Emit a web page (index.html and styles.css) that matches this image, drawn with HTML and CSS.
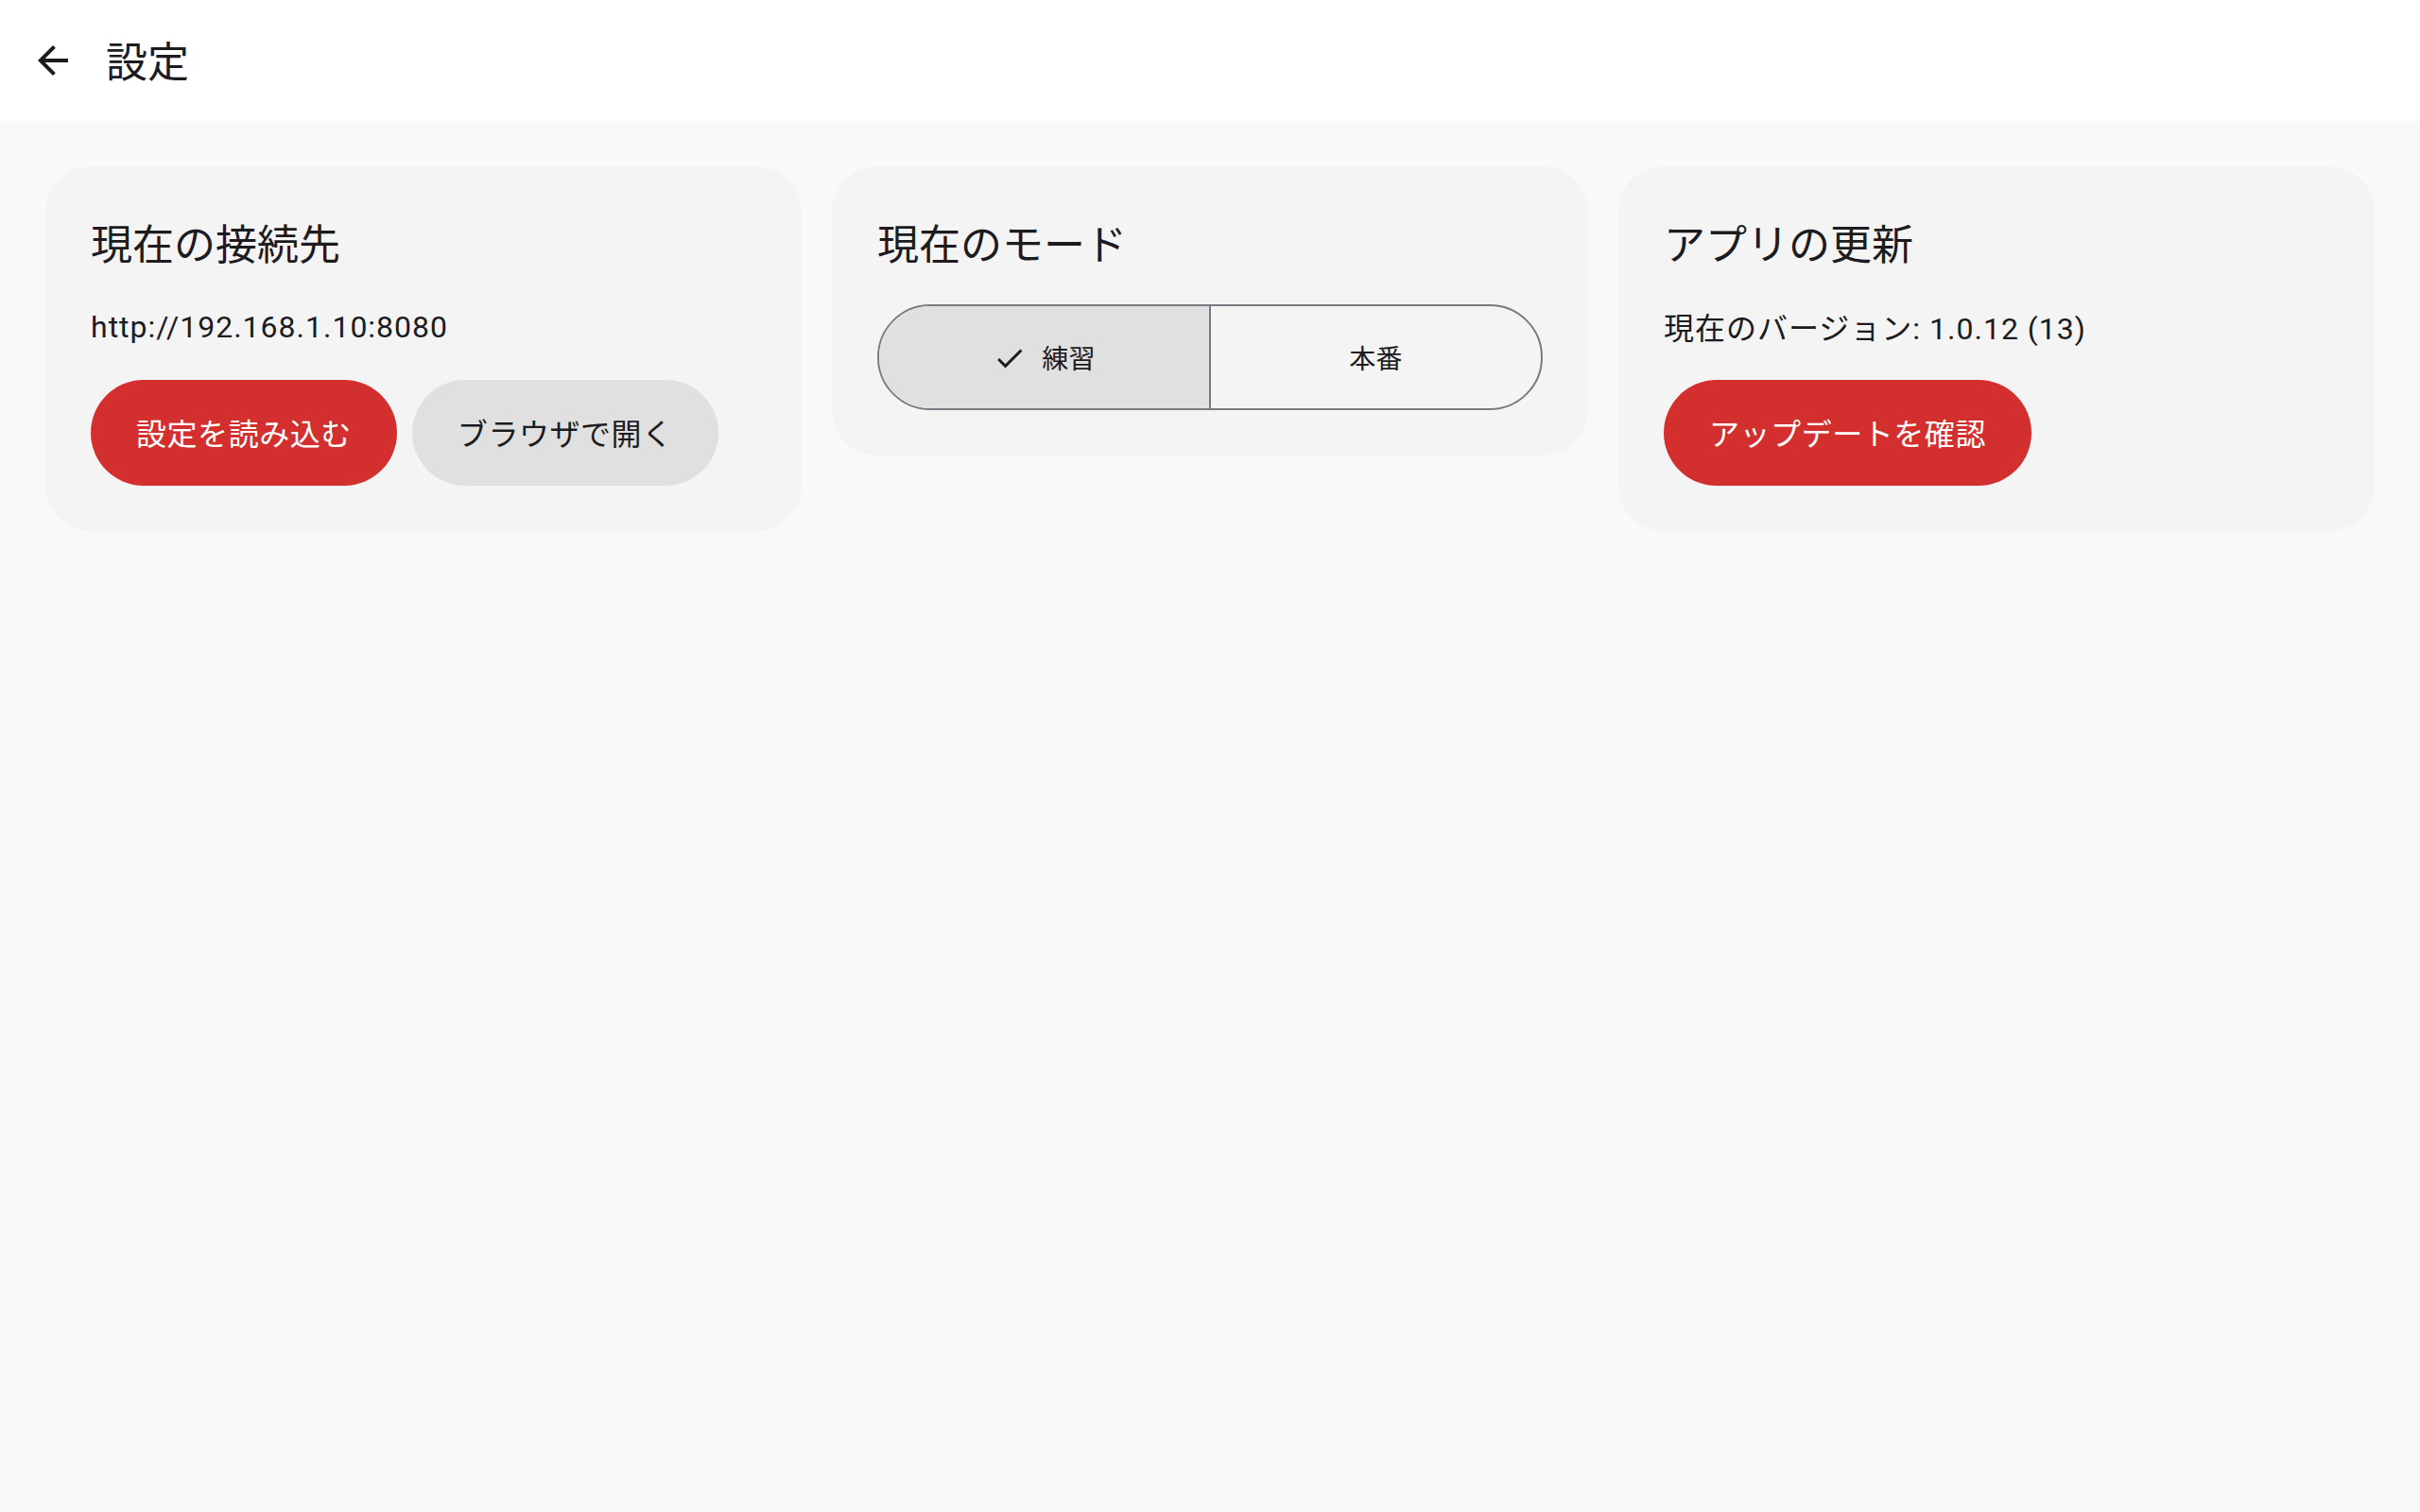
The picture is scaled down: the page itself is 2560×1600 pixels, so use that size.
FILE: index.html
```html
<!DOCTYPE html>
<html lang="ja">
<head>
<meta charset="utf-8">
<title>設定</title>
<link rel="stylesheet" href="styles.css">
</head>
<body>
<header class="topbar">
  <button class="nav-btn" aria-label="戻る">
    <svg class="nav-icon" viewBox="0 0 24 24" width="48" height="48"><path d="M20 11H7.83l5.59-5.59L12 4l-8 8 8 8 1.41-1.41L7.83 13H20v-2z"/></svg>
  </button>
  <h1 class="topbar-title">設定</h1>
</header>
<main class="cards">
  <section class="card">
    <h2 class="card-title">現在の接続先</h2>
    <p class="card-text">http://192.168.1.10:8080</p>
    <div class="actions">
      <button class="btn btn-primary">設定を読み込む</button>
      <button class="btn btn-tonal">ブラウザで開く</button>
    </div>
  </section>
  <section class="card">
    <h2 class="card-title">現在のモード</h2>
    <div class="segmented">
      <button class="seg seg-selected">
        <svg class="seg-check" viewBox="0 0 24 24" width="36" height="36"><path d="M9 16.17L4.83 12l-1.42 1.41L9 19 21 7l-1.41-1.41z"/></svg>
        <span class="seg-label">練習</span>
      </button>
      <button class="seg"><span class="seg-label">本番</span></button>
    </div>
  </section>
  <section class="card">
    <h2 class="card-title">アプリの更新</h2>
    <p class="card-text card-text-version">現在のバージョン: 1.0.12 (13)</p>
    <div class="actions">
      <button class="btn btn-primary">アップデートを確認</button>
    </div>
  </section>
</main>
</body>
</html>
```
FILE: styles.css
```css
* { box-sizing: border-box; }
html, body {
  margin: 0;
  padding: 0;
}
body {
  width: 2560px;
  min-height: 1600px;
  background: #f9f9f9;
  color: #1c1b1f;
  font-family: Roboto, "Noto Sans CJK JP", sans-serif;
}
button {
  font-family: inherit;
  color: inherit;
  border: none;
  background: none;
  padding: 0;
  margin: 0;
  cursor: pointer;
}
.topbar {
  height: 128px;
  background: #ffffff;
  display: flex;
  align-items: center;
  padding-left: 8px;
}
.nav-btn {
  width: 96px;
  height: 96px;
  display: flex;
  align-items: center;
  justify-content: center;
}
.nav-icon { fill: #1c1b1f; display: block; }
.topbar-title {
  margin: 0 0 0 8px;
  font-size: 44px;
  font-weight: 400;
  line-height: 56px;
  padding-top: 6px;
}
.cards {
  display: grid;
  grid-template-columns: repeat(3, 800px);
  column-gap: 32px;
  padding: 48px;
  align-items: start;
}
.card {
  background: #f4f4f4;
  border-radius: 48px;
  padding: 48px;
}
.card-title {
  margin: 8px 0 0;
  font-size: 44px;
  font-weight: 400;
  line-height: 56px;
}
.card-text {
  margin: 34px 0 0;
  font-size: 32px;
  line-height: 48px;
  letter-spacing: 1px;
}
.card-text-version {
  margin-top: 36px;
}
.actions {
  margin-top: 32px;
  display: flex;
  gap: 16px;
}
.card-text-version + .actions { margin-top: 30px; }
.btn {
  height: 112px;
  padding: 3px 48px 0;
  border-radius: 56px;
  font-size: 32px;
  line-height: 40px;
  letter-spacing: 0.55px;
  display: flex;
  align-items: center;
  justify-content: center;
}
.btn-primary {
  background: #d32f2f;
  color: #ffffff;
}
.btn-tonal {
  background: #e0e0e0;
  color: #1c1b1f;
}
.segmented {
  margin-top: 34px;
  height: 112px;
  display: flex;
  border: 2px solid #7d7882;
  border-radius: 56px;
  overflow: hidden;
}
.seg {
  flex: 1;
  display: flex;
  align-items: center;
  justify-content: center;
  gap: 16px;
  padding-top: 2px;
  font-size: 28px;
  line-height: 40px;
  letter-spacing: 0.2px;
}
.seg-label {
  display: block;
  padding-top: 4px;
}
.seg + .seg { border-left: 2px solid #7d7882; }
.seg-selected { background: #e0e0e0; }
.seg-check { fill: #1c1b1f; display: block; }
```
